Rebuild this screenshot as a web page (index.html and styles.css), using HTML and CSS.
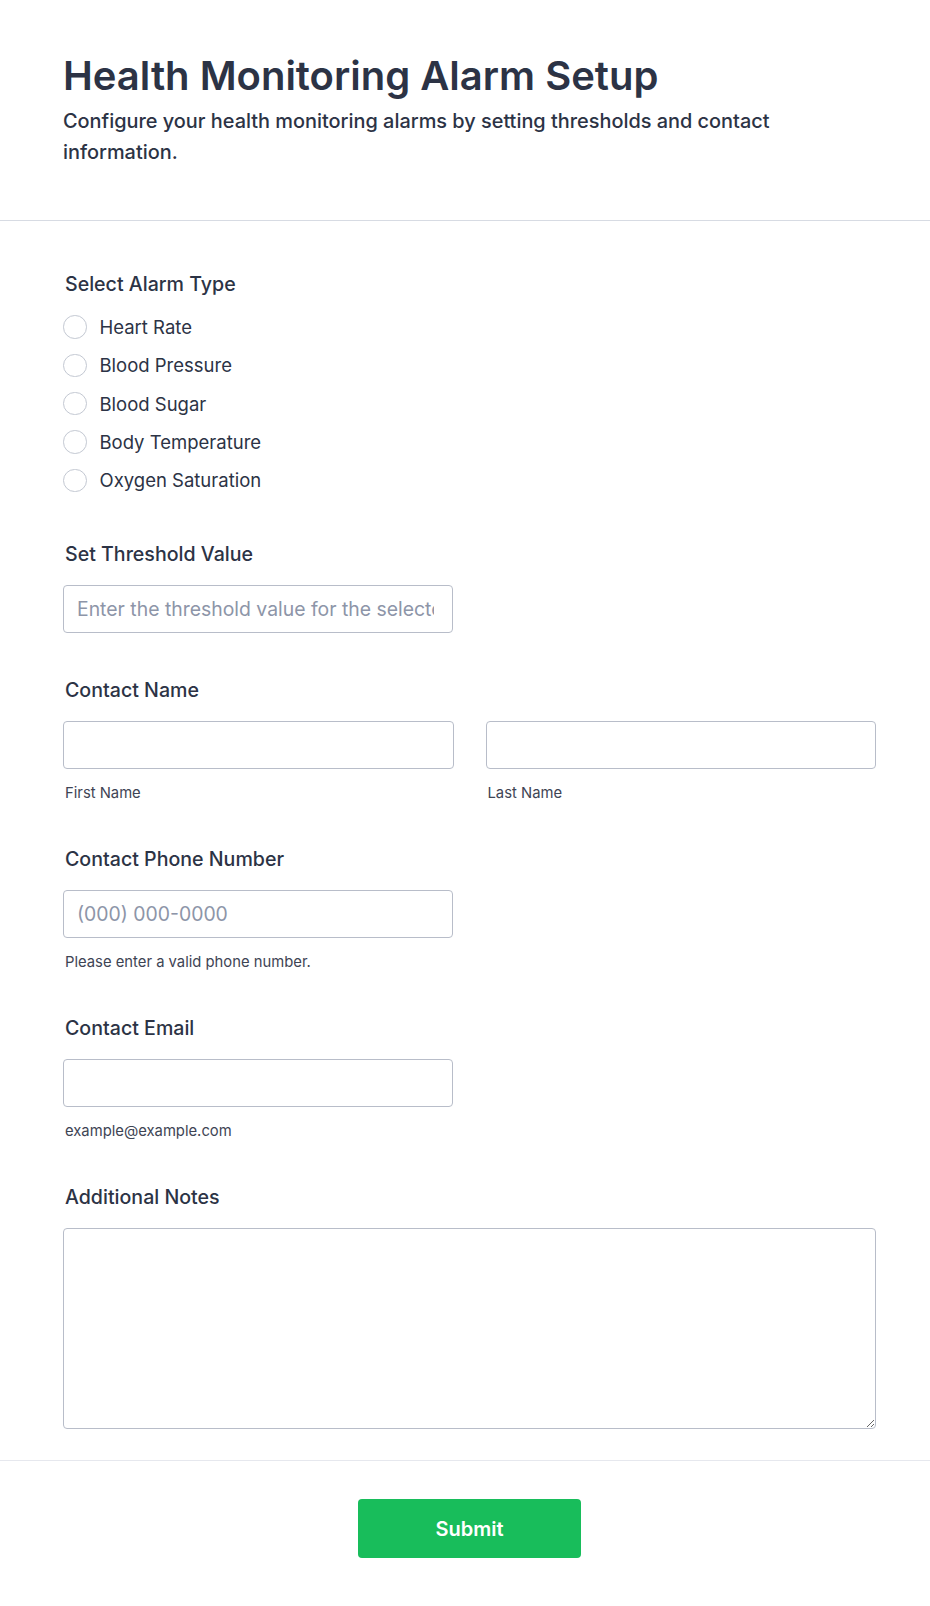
FILE: index.html
```html
<!DOCTYPE html>
<html lang="en">
<head>
    <meta charset="UTF-8">
    <title>Health Monitoring Alarm Setup</title>
    <link rel="stylesheet" href="styles.css">
</head>
<body>
<div class="header">
    <h1 class="title">Health Monitoring Alarm Setup</h1>
    <p class="subtitle">Configure your health monitoring alarms by setting thresholds and contact information.</p>
</div>

<form class="form">
    <div class="field field-radio">
        <div class="label">Select Alarm Type</div>
        <ul class="radioList">
            <li><label><input type="radio" name="alarm"><span>Heart Rate</span></label></li>
            <li><label><input type="radio" name="alarm"><span>Blood Pressure</span></label></li>
            <li><label><input type="radio" name="alarm"><span>Blood Sugar</span></label></li>
            <li><label><input type="radio" name="alarm"><span>Body Temperature</span></label></li>
            <li><label><input type="radio" name="alarm"><span>Oxygen Saturation</span></label></li>
        </ul>
    </div>

    <div class="field">
        <label class="label" for="threshold">Set Threshold Value</label>
        <input class="input half" id="threshold" type="text" placeholder="Enter the threshold value for the selected alarm">
    </div>

    <div class="field">
        <div class="label">Contact Name</div>
        <div class="nameRow">
            <div>
                <input class="input" type="text">
                <div class="sublabel">First Name</div>
            </div>
            <div>
                <input class="input" type="text">
                <div class="sublabel">Last Name</div>
            </div>
        </div>
    </div>

    <div class="field">
        <label class="label" for="phone">Contact Phone Number</label>
        <input class="input half" id="phone" type="tel" placeholder="(000) 000-0000">
        <div class="sublabel">Please enter a valid phone number.</div>
    </div>

    <div class="field">
        <label class="label" for="email">Contact Email</label>
        <input class="input half" id="email" type="email">
        <div class="sublabel">example@example.com</div>
    </div>

    <div class="field field-last">
        <label class="label" for="notes">Additional Notes</label>
        <textarea class="textarea" id="notes"></textarea>
    </div>

    <div class="footer">
        <button class="submit" type="submit">Submit</button>
    </div>
</form>
</body>
</html>
```

FILE: styles.css
```css
*{
    margin: 0;
    padding: 0;
    box-sizing: border-box;
}
ul,li{
    list-style: none;
}
body{
    font-family: Inter, "Noto Sans", sans-serif;
    color: #2c3345;
    background-color: #fff;
}
/*头部*/
.header{
    padding: 52px 54px 52px 63px;
    border-bottom: 1px solid #d7dbe3;
}
.header .title{
    font-size: 40px;
    line-height: 48px;
    font-weight: 600;
}
.header .subtitle{
    max-width: 780px;
    margin-top: 6px;
    font-size: 19.9px;
    line-height: 31px;
    font-weight: 500;
}
/*表单*/
.form{
    padding-top: 51px;
}
.field{
    margin: 0 54px 45px 63px;
}
.field-radio{
    margin-bottom: 43px;
}
.field-last{
    margin-bottom: 31px;
}
.label{
    display: block;
    padding-left: 2px;
    font-size: 19.6px;
    line-height: 24px;
    font-weight: 500;
}
/*单选框*/
.radioList{
    margin-top: 12px;
}
.radioList li{
    height: 38.3px;
    display: flex;
    align-items: center;
}
.radioList label{
    display: flex;
    align-items: center;
    font-size: 18.5px;
    color: #2c3345;
}
.radioList input{
    appearance: none;
    width: 23.5px;
    height: 23.5px;
    border: 1px solid #c3c8d2;
    border-radius: 50%;
    margin-right: 13px;
    background-color: #fff;
}
/*输入框*/
.input{
    display: block;
    width: 100%;
    height: 48px;
    margin-top: 19px;
    padding: 0 18px 0 13px;
    border: 1px solid #b8bdc9;
    border-radius: 4px;
    font-family: inherit;
    font-size: 19.4px;
    color: #2c3345;
    background-color: #fff;
}
.input.half{
    width: 390px;
}
.input::placeholder{
    color: #8d95a8;
}
.nameRow{
    display: grid;
    grid-template-columns: 1fr 1fr;
    gap: 32px;
}
.sublabel{
    margin-top: 15px;
    padding-left: 2px;
    font-size: 14.8px;
    line-height: 18px;
    color: #3e4454;
}
.textarea{
    display: block;
    width: 100%;
    height: 201px;
    margin-top: 19px;
    border: 1px solid #b8bdc9;
    border-radius: 4px;
    resize: vertical;
    font-family: inherit;
    font-size: 18px;
}
/*底部按钮*/
.footer{
    border-top: 1px solid #e6e8ee;
    padding: 38px 54px 49px 63px;
    display: flex;
    justify-content: center;
}
.submit{
    width: 223px;
    height: 59px;
    border: none;
    border-radius: 4px;
    background-color: #18bd5b;
    color: #fff;
    font-family: inherit;
    font-size: 20px;
    font-weight: 600;
    cursor: pointer;
}
```
